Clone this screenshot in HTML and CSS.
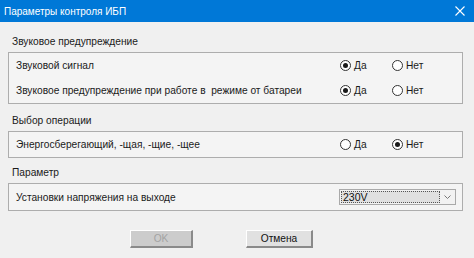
FILE: index.html
```html
<!DOCTYPE html>
<html lang="ru">
<head>
<meta charset="utf-8">
<link rel="stylesheet" href="styles.css">
</head>
<body>
<div class="window">
  <div class="titlebar">
    <span class="title">Параметры контроля ИБП</span>
    <svg class="close" width="10" height="10" viewBox="0 0 10 10"><path d="M0.5 0.5L9.5 9.5M9.5 0.5L0.5 9.5" stroke="#fff" stroke-width="1.1"/></svg>
  </div>
  <div class="content">
    <div class="group g1">
      <div class="group-label">Звуковое предупреждение</div>
      <div class="box">
        <div class="row">
          <span class="row-text">Звуковой сигнал</span>
          <span class="opt"><span class="radio checked"></span>Да</span>
          <span class="opt"><span class="radio"></span>Нет</span>
        </div>
        <div class="row">
          <span class="row-text">Звуковое предупреждение при работе в&nbsp; режиме от батареи</span>
          <span class="opt"><span class="radio checked"></span>Да</span>
          <span class="opt"><span class="radio"></span>Нет</span>
        </div>
      </div>
    </div>
    <div class="group g2">
      <div class="group-label">Выбор операции</div>
      <div class="box">
        <div class="row">
          <span class="row-text">Энергосберегающий, -щая, -щие, -щее</span>
          <span class="opt"><span class="radio"></span>Да</span>
          <span class="opt"><span class="radio checked"></span>Нет</span>
        </div>
      </div>
    </div>
    <div class="group g3">
      <div class="group-label">Параметр</div>
      <div class="box">
        <div class="row row-select">
          <span class="row-text">Установки напряжения на выходе</span>
          <div class="select">
            <span class="select-value">230V</span>
            <span class="select-arrow"><svg width="7" height="4" viewBox="0 0 7 4"><path d="M0.5 0.5L3.5 3.5L6.5 0.5" fill="none" stroke="#777" stroke-width="1"/></svg></span>
          </div>
        </div>
      </div>
    </div>
    <div class="buttons">
      <button class="btn btn-ok" disabled>OK</button>
      <button class="btn btn-cancel">Отмена</button>
    </div>
  </div>
</div>
</body>
</html>
```

FILE: styles.css
```css
* { box-sizing: border-box; }
html, body { margin: 0; padding: 0; }
body {
  width: 474px;
  height: 258px;
  overflow: hidden;
  background: #f0f0f0;
  font-family: "Liberation Sans", Arial, sans-serif;
  font-size: 10.2px;
  color: #1a1a1a;
}
.window {
  width: 474px;
  height: 258px;
  display: flex;
  flex-direction: column;
  background: #f0f0f0;
}
.titlebar {
  height: 22px;
  background: #0078d7;
  color: #fff;
  display: flex;
  align-items: center;
  justify-content: space-between;
  padding: 0 9px 0 4px;
  font-size: 10px;
}
.content {
  padding: 0 11px 0 8px;
  display: flex;
  flex-direction: column;
}
.group-label {
  height: 14px;
  line-height: 14px;
  padding-left: 4px;
  margin-bottom: 3px;
}
.g1 { margin-top: 13px; }
.g2 { margin-top: 10px; }
.g3 { margin-top: 8px; }
.box {
  border: 1px solid #adadad;
  background: #f4f4f4;
}
.row {
  display: grid;
  grid-template-columns: 1fr 52px 70px;
  align-items: center;
  height: 25px;
  padding-left: 7px;
}
.row-text { white-space: nowrap; }
.row-select {
  grid-template-columns: 1fr 117px;
  height: 26px;
  padding-right: 6px;
}
.opt {
  display: flex;
  align-items: center;
  gap: 3px;
}
.radio {
  width: 11px;
  height: 11px;
  border: 1px solid #333;
  border-radius: 50%;
  background: #fff;
  display: flex;
  align-items: center;
  justify-content: center;
}
.radio.checked::after {
  content: "";
  width: 5px;
  height: 5px;
  border-radius: 50%;
  background: #1a1a1a;
}
.select {
  height: 16px;
  border: 1px solid #a9a9a9;
  background: #f2f2f2;
  display: flex;
  align-items: stretch;
  padding: 1px;
}
.select-value {
  flex: 1;
  background: #e0e0e0;
  border: 1px dotted #555;
  line-height: 11px;
  font-size: 10.5px;
  padding-left: 1px;
  color: #111;
}
.select-arrow {
  width: 14px;
  display: flex;
  align-items: center;
  justify-content: center;
}
.buttons {
  display: flex;
  gap: 53px;
  padding-left: 122px;
  margin-top: 19px;
}
.btn {
  height: 18px;
  font-family: "Liberation Sans", sans-serif;
  font-size: 10.2px;
  padding: 0;
  border-style: solid;
  border-width: 1px 2px 2px 1px;
  border-color: #fff #8a8a8a #8a8a8a #fff;
}
.btn-ok {
  width: 63px;
  background: #cccccc;
  color: #a3a3a3;
}
.btn-cancel {
  width: 67px;
  background: #e1e1e1;
  color: #111;
}
```
